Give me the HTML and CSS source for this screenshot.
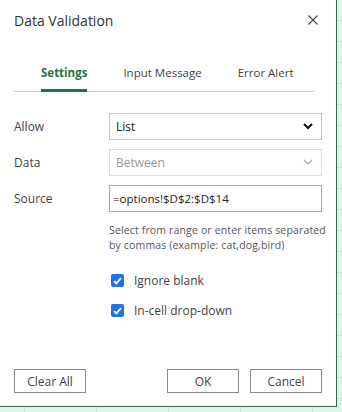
FILE: index.html
```html
<!DOCTYPE html>
<html lang="en">
<head>
    <meta charset="UTF-8">
    <meta name="viewport" content="width=device-width, initial-scale=1.0">
    <title>Data Validation</title>
    <link rel="stylesheet" href="styles.css">
</head>
<body>
    <div class="dialog">
        <div class="dialog-header">
            <span class="dialog-title">Data Validation</span>
            <button class="close-btn" aria-label="Close">
                <svg width="10" height="10" viewBox="0 0 10 10"><path d="M0.5 0.5 L9.5 9.5 M9.5 0.5 L0.5 9.5" stroke="#444" stroke-width="1.1" fill="none"/></svg>
            </button>
        </div>
        <div class="tabs">
            <div class="tab active">Settings</div>
            <div class="tab">Input Message</div>
            <div class="tab">Error Alert</div>
        </div>
        <div class="form">
            <div class="form-row">
                <label class="form-label">Allow</label>
                <div class="select">
                    <span>List</span>
                    <svg width="10" height="7" viewBox="0 0 10 7"><path d="M1 1 L5 5 L9 1" stroke="#111" stroke-width="2" fill="none"/></svg>
                </div>
            </div>
            <div class="form-row">
                <label class="form-label">Data</label>
                <div class="select disabled">
                    <span>Between</span>
                    <svg width="10" height="7" viewBox="0 0 10 7"><path d="M1 1 L5 5 L9 1" stroke="#aaa" stroke-width="1.4" fill="none"/></svg>
                </div>
            </div>
            <div class="form-row">
                <label class="form-label">Source</label>
                <div class="text-input">=options!$D$2:$D$14</div>
            </div>
            <div class="form-row">
                <span class="form-label"></span>
                <p class="hint">Select from range or enter items separated<br>by commas (example: cat,dog,bird)</p>
            </div>
            <div class="checks">
                <label class="check"><span class="box">
                    <svg width="9" height="8" viewBox="0 0 9 8"><path d="M1 4.2 L3.4 6.4 L8 1.2" stroke="#fff" stroke-width="1.8" fill="none"/></svg>
                </span>Ignore blank</label>
                <label class="check"><span class="box">
                    <svg width="9" height="8" viewBox="0 0 9 8"><path d="M1 4.2 L3.4 6.4 L8 1.2" stroke="#fff" stroke-width="1.8" fill="none"/></svg>
                </span>In-cell drop-down</label>
            </div>
        </div>
        <div class="dialog-footer">
            <button class="btn">Clear All</button>
            <div class="footer-right">
                <button class="btn">OK</button>
                <button class="btn">Cancel</button>
            </div>
        </div>
    </div>
</body>
</html>
```

FILE: styles.css
```css
body {
    margin: 0;
    font-family: 'Open Sans', 'Noto Sans', sans-serif;
    color: #333;
    background-color: #e3f1e8;
    background-image:
        repeating-linear-gradient(to bottom, transparent 0, transparent 20px, #cfe3d6 20px, #cfe3d6 21px),
        repeating-linear-gradient(to right, transparent 0, transparent 24px, #cfe3d6 24px, #cfe3d6 25px, transparent 25px, transparent 72px);
    height: 412px;
    overflow: hidden;
}
.dialog {
    width: 336px;
    height: 406px;
    background: #fff;
    border-right: 1px solid #2a6e48;
    border-bottom: 1px solid #2a6e48;
    display: flex;
    flex-direction: column;
}
.dialog-header {
    display: flex;
    justify-content: space-between;
    align-items: center;
    padding: 9px 18px 0 14px;
    height: 22px;
}
.dialog-title {
    font-size: 14px;
    color: #333;
}
.close-btn {
    background: none;
    border: none;
    padding: 0;
    display: flex;
    cursor: pointer;
}
.tabs {
    display: flex;
    margin: 28px 22px 0 14px;
    padding-left: 27px;
    gap: 36px;
    border-bottom: 1px solid #c8c8c8;
}
.tab {
    font-size: 11.5px;
    color: #444;
    padding: 6px 0 9px;
    border-bottom: 3px solid transparent;
    margin-bottom: -1px;
}
.tab.active {
    color: #217346;
    font-weight: bold;
    border-bottom-color: #217346;
}
.form {
    padding: 21px 14px 0 14px;
    flex: 1;
}
.form-row {
    display: flex;
    align-items: center;
    margin-bottom: 9px;
}
.form-label {
    width: 95px;
    flex-shrink: 0;
    font-size: 12px;
    color: #444;
}
.select,
.text-input {
    flex: 1;
    height: 25px;
    border: 1px solid #c6c6c6;
    display: flex;
    align-items: center;
    justify-content: space-between;
    padding: 0 8px 0 6px;
    font-size: 12px;
    color: #222;
}
.select.disabled {
    color: #9a9a9a;
    border-color: #dcdcdc;
}
.text-input {
    border-color: #a8a8a8;
    padding-left: 3px;
    font-size: 11.5px;
}
.hint {
    margin: 2px 0 0;
    font-size: 10.5px;
    letter-spacing: 0.15px;
    line-height: 15px;
    white-space: nowrap;
    color: #555;
}
.checks {
    padding-left: 97px;
    display: flex;
    flex-direction: column;
    gap: 13px;
    margin-top: 19px;
}
.check {
    display: flex;
    align-items: center;
    gap: 10px;
    font-size: 12px;
    color: #444;
}
.box {
    width: 13px;
    height: 13px;
    border-radius: 2px;
    background: #1a73e8;
    display: flex;
    align-items: center;
    justify-content: center;
}
.dialog-footer {
    display: flex;
    justify-content: space-between;
    padding: 0 14px 13px 14px;
}
.footer-right {
    display: flex;
    gap: 11px;
}
.btn {
    height: 24px;
    width: 72px;
    background: #fff;
    border: 1px solid #8a8a8a;
    font-family: 'Open Sans', 'Noto Sans', sans-serif;
    font-size: 12px;
    color: #444;
    padding: 0;
    cursor: pointer;
}
```
